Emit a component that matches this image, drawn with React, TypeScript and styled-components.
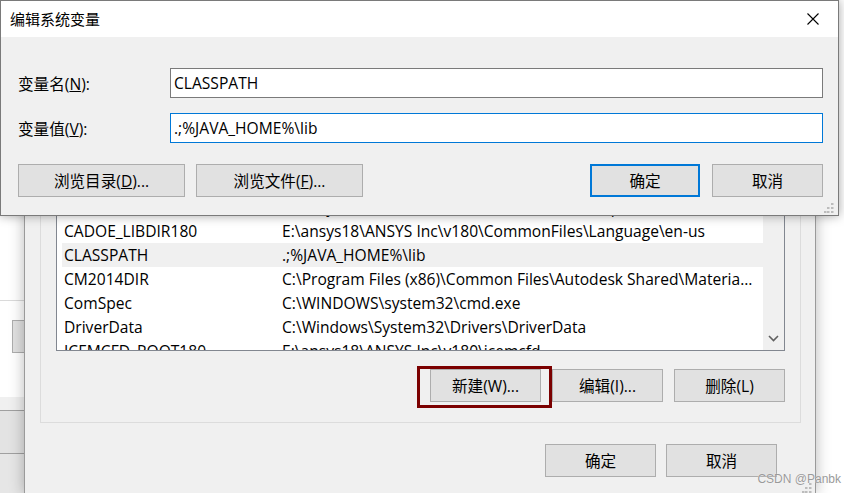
import styled, { createGlobalStyle } from "styled-components";

const GlobalStyle = createGlobalStyle`
  html, body {
    margin: 0;
    padding: 0;
  }
  body {
    background: #ffffff;
    font-family: "Open Sans", "Noto Sans CJK SC", sans-serif;
    font-size: 15.6px;
    color: #000000;
  }
  * {
    box-sizing: border-box;
  }
`;

const Desktop = styled.div`
  position: relative;
  width: 844px;
  height: 493px;
  overflow: hidden;
  background: #ffffff;
`;

/* sliver of another window on the left */
const SideWindow = styled.div`
  position: absolute;
  left: 0;
  top: 0;
  width: 24px;
  height: 493px;
  display: flex;
  flex-direction: column;
  background: #ffffff;
`;
const SidePane = styled.div`
  height: 301px;
  border-bottom: 1px solid #dadada;
`;
const SideButtonArea = styled.div`
  height: 96px;
  padding: 19px 0 0 12px;
`;
const SideButton = styled.div`
  height: 33px;
  background: #e1e1e1;
  border: 1px solid #adadad;
  border-right: none;
`;
const SideStrip = styled.div<{ $bg: string; $h: number }>`
  height: ${(p) => p.$h}px;
  background: ${(p) => p.$bg};
  border-bottom: 1px solid #a0a0a0;
`;
const SideFill = styled.div`
  flex: 1;
  background: #e6e6e6;
`;

/* environment variables dialog, behind */
const EnvDialog = styled.div`
  position: absolute;
  left: 24px;
  top: 0;
  width: 792px;
  height: 494px;
  background: #f0f0f0;
  border-left: 1px solid #9a9a9a;
  border-right: 1px solid #9a9a9a;
  box-shadow: 0 0 14px rgba(0, 0, 0, 0.28);
  display: flex;
  flex-direction: column;
  padding: 164px 14px 0 15px;
`;
const GroupBox = styled.div`
  border: 1px solid #dcdcdc;
  padding: 29px 15px 20px 15px;
`;
const ListBox = styled.div`
  height: 157px;
  border: 1px solid #828790;
  background: #ffffff;
  display: flex;
`;
const Rows = styled.div`
  flex: 1;
  min-width: 0;
  padding-left: 5px;
  overflow: hidden;
  display: flex;
  flex-direction: column;
`;
const Row = styled.div<{ $selected?: boolean }>`
  flex-shrink: 0;
  height: 24px;
  display: flex;
  align-items: center;
  padding-left: 2px;
  background: ${(p) => (p.$selected ? "#f0f0f0" : "transparent")};
`;
const NameCell = styled.span`
  width: 218px;
  flex-shrink: 0;
  white-space: nowrap;
`;
const ValueCell = styled.span`
  flex: 1;
  min-width: 0;
  padding-right: 9px;
  white-space: nowrap;
  overflow: hidden;
  text-overflow: ellipsis;
`;
const ScrollTrack = styled.div`
  width: 21px;
  background: #f0f0f0;
  display: flex;
  flex-direction: column;
  justify-content: flex-end;
  align-items: center;
  padding-bottom: 8px;
`;
const ButtonBar = styled.div<{ $gap: number; $top: number; $right?: number }>`
  display: flex;
  justify-content: flex-end;
  align-items: center;
  gap: ${(p) => p.$gap}px;
  margin-top: ${(p) => p.$top}px;
  margin-right: ${(p) => p.$right ?? 0}px;
`;
const Annotated = styled.div`
  position: relative;
`;
const RedBox = styled.div`
  position: absolute;
  top: -3px;
  left: -13px;
  right: -11px;
  bottom: -6px;
  border: 3px solid #7b0000;
  pointer-events: none;
`;

/* edit system variable dialog, on top */
const EditDialog = styled.div`
  position: absolute;
  left: 0;
  top: 0;
  width: 839px;
  height: 216px;
  background: #f0f0f0;
  border: 1px solid #7a7a7a;
  box-shadow: 0 0 10px rgba(0, 0, 0, 0.35);
  display: flex;
  flex-direction: column;
  z-index: 2;
`;
const TitleBar = styled.div`
  height: 36px;
  background: #ffffff;
  display: flex;
  align-items: center;
  justify-content: space-between;
  padding-left: 9px;
`;
const Title = styled.span`
  font-size: 15px;
  margin-top: -1px;
`;
const CloseButton = styled.div`
  width: 50px;
  height: 36px;
  display: flex;
  align-items: center;
  justify-content: center;
`;
const DialogBody = styled.div`
  flex: 1;
  padding: 31px 15px 0 16px;
`;
const Form = styled.div`
  display: grid;
  grid-template-columns: 153px 1fr;
  grid-auto-rows: 30px;
  row-gap: 15px;
  align-items: center;
`;
const Label = styled.span`
  padding-left: 1px;
`;
const Field = styled.div<{ $focused?: boolean }>`
  height: 30px;
  background: #ffffff;
  border: 1px solid ${(p) => (p.$focused ? "#0078d7" : "#7a7a7a")};
  padding: 0 3px 1px;
  display: flex;
  align-items: center;
  white-space: nowrap;
`;
const ActionRow = styled.div`
  display: flex;
  align-items: center;
  margin-top: 21px;
  padding-left: 1px;
`;
const ActionGroup = styled.div<{ $gap: number }>`
  display: flex;
  gap: ${(p) => p.$gap}px;
`;
const Spacer = styled.div`
  flex: 1;
`;
const Button = styled.div<{ $w: number; $default?: boolean }>`
  width: ${(p) => p.$w}px;
  height: 33px;
  background: #e1e1e1;
  border: ${(p) => (p.$default ? "2px solid #0078d7" : "1px solid #adadad")};
  display: flex;
  align-items: center;
  justify-content: center;
  white-space: nowrap;
`;
const Grip = styled.svg<{ $right: number; $bottom: number }>`
  position: absolute;
  right: ${(p) => p.$right}px;
  bottom: ${(p) => p.$bottom}px;
`;
const Watermark = styled.div`
  position: absolute;
  right: 3px;
  bottom: 7px;
  z-index: 3;
  font-family: "Liberation Sans", Arial, sans-serif;
  font-size: 12px;
  color: #9a9a9a;
  text-shadow: 0 0 1px #ffffff;
`;

const variables = [
  { name: "CADOE_DOCDIR180", value: "E:\\ansys18\\ANSYS Inc\\v180\\CommonFiles\\help\\en-us" },
  { name: "CADOE_LIBDIR180", value: "E:\\ansys18\\ANSYS Inc\\v180\\CommonFiles\\Language\\en-us" },
  { name: "CLASSPATH", value: ".;%JAVA_HOME%\\lib", selected: true },
  { name: "CM2014DIR", value: "C:\\Program Files (x86)\\Common Files\\Autodesk Shared\\Materials\\" },
  { name: "ComSpec", value: "C:\\WINDOWS\\system32\\cmd.exe" },
  { name: "DriverData", value: "C:\\Windows\\System32\\Drivers\\DriverData" },
  { name: "ICEMCFD_ROOT180", value: "E:\\ansys18\\ANSYS Inc\\v180\\icemcfd" },
];

const GripIcon = ({ right, bottom }: { right: number; bottom: number }) => (
  <Grip $right={right} $bottom={bottom} width="10" height="10" viewBox="0 0 10 10">
    {[
      [7, 0],
      [3, 4],
      [7, 4],
      [0, 8],
      [3, 8],
      [7, 8],
    ].map(([x, y], i) => (
      <rect key={i} x={x} y={y} width="2.5" height="2" fill="#bcbcbc" />
    ))}
  </Grip>
);

export default function App() {
  return (
    <>
      <GlobalStyle />
      <Desktop>
        <SideWindow>
          <SidePane />
          <SideButtonArea>
            <SideButton />
          </SideButtonArea>
          <SideStrip $bg="#f0f0f0" $h={14} />
          <SideStrip $bg="#e3e3e3" $h={43} />
          <SideFill />
        </SideWindow>

        <EnvDialog>
          <GroupBox>
            <ListBox>
              <Rows>
                {variables.map((v) => (
                  <Row key={v.name} $selected={v.selected}>
                    <NameCell>{v.name}</NameCell>
                    <ValueCell>{v.value}</ValueCell>
                  </Row>
                ))}
              </Rows>
              <ScrollTrack>
                <svg width="11" height="7" viewBox="0 0 11 7">
                  <polyline points="1,1 5.5,5.5 10,1" fill="none" stroke="#606060" strokeWidth="1.6" />
                </svg>
              </ScrollTrack>
            </ListBox>
            <ButtonBar $gap={11} $top={18}>
              <Annotated>
                <Button $w={111}>新建(W)...</Button>
                <RedBox />
              </Annotated>
              <Button $w={111}>编辑(I)...</Button>
              <Button $w={111}>删除(L)</Button>
            </ButtonBar>
          </GroupBox>
          <ButtonBar $gap={10} $top={21} $right={24}>
            <Button $w={111}>确定</Button>
            <Button $w={111}>取消</Button>
          </ButtonBar>
          <GripIcon right={3} bottom={1} />
        </EnvDialog>

        <EditDialog>
          <TitleBar>
            <Title>编辑系统变量</Title>
            <CloseButton>
              <svg width="12" height="12" viewBox="0 0 12 12">
                <path d="M0.5 0.5 L11.5 11.5 M11.5 0.5 L0.5 11.5" stroke="#000" strokeWidth="1.1" />
              </svg>
            </CloseButton>
          </TitleBar>
          <DialogBody>
            <Form>
              <Label>
                变量名(<u>N</u>):
              </Label>
              <Field>CLASSPATH</Field>
              <Label>
                变量值(<u>V</u>):
              </Label>
              <Field $focused>.;%JAVA_HOME%\lib</Field>
            </Form>
            <ActionRow>
              <ActionGroup $gap={11}>
                <Button $w={167}>
                  浏览目录(<u>D</u>)...
                </Button>
                <Button $w={167}>
                  浏览文件(<u>F</u>)...
                </Button>
              </ActionGroup>
              <Spacer />
              <ActionGroup $gap={12}>
                <Button $w={110} $default>
                  确定
                </Button>
                <Button $w={111}>取消</Button>
              </ActionGroup>
            </ActionRow>
          </DialogBody>
          <GripIcon right={4} bottom={2} />
        </EditDialog>

        <Watermark>CSDN @Panbk</Watermark>
      </Desktop>
    </>
  );
}
